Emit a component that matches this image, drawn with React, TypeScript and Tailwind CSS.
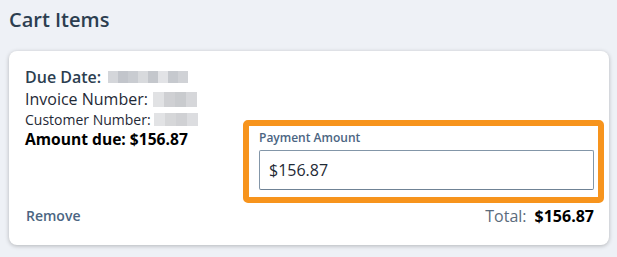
import React from 'react';

const Blur: React.FC<{ cells: string[]; h: number; w: number }> = ({ cells, h, w }) => (
  <span className="inline-flex align-middle" style={{ height: h }}>
    {cells.map((c, i) => (
      <span key={i} style={{ width: w, height: h, background: c }} />
    ))}
  </span>
);

const App: React.FC = () => {
  return (
    <div
      className="w-[617px] h-[257px] bg-[#eef1f6] pt-[6px] px-[9px] overflow-hidden"
      style={{ fontFamily: '"Open Sans", sans-serif' }}
    >
      <h2 className="text-[20px] leading-[28px] font-semibold text-[#2c3e50] mb-[17px]">Cart Items</h2>

      <div className="w-[600px] bg-white rounded-lg shadow-[0_1px_4px_rgba(0,0,0,0.25)] pt-[15px] pb-[18px] pl-[16px] pr-[15px] flex">
        <div className="flex-1 flex flex-col justify-between">
          <div>
            <div className="text-[16px] leading-[22px] font-semibold text-[#2c3e50] flex items-center gap-[7px]">
              Due Date:
              <Blur h={12} w={10} cells={['#d4d6da', '#c2c5cb', '#c9ccd1', '#d8dadd', '#c4c7cc', '#e2e3e6', '#c6c9ce', '#d0d2d6']} />
            </div>
            <div className="text-[16px] leading-[22px] text-[#1f2a36] flex items-center gap-[5px]">
              Invoice Number:
              <Blur h={15} w={11} cells={['#e1e2e4', '#cfd0d3', '#c9cbce', '#d6d7da']} />
            </div>
            <div className="text-[14px] leading-[19px] text-[#1f2a36] flex items-center gap-[3px]">
              Customer Number:
              <Blur h={13} w={11} cells={['#e2e3e5', '#d6d7d9', '#d0d1d4', '#dcdde0']} />
            </div>
            <div className="text-[15.6px] leading-[20px] font-bold text-black">Amount due: $156.87</div>
          </div>
          <div className="text-[14px] leading-[22px] font-semibold text-[#4b6582] pl-[1px]">Remove</div>
        </div>

        <div className="w-[361px] -mr-[10px] mt-[54px] flex flex-col">
          <div className="border-[6px] border-[#f7941d] rounded-[5px] pl-[10px] pr-[4px] pt-[3px] pb-[7px]">
            <div className="text-[12px] leading-[18px] font-semibold text-[#4b6582] mb-[3px]">Payment Amount</div>
            <div className="h-[40px] border border-[#8396a8] border-b-[#6f8295] rounded-[2px] flex items-center px-[9px] text-[16px] text-[#1f2a36]">
              $156.87
            </div>
          </div>
          <div className="flex justify-end items-baseline gap-[8px] pr-[10px] mt-[2px] leading-[22px]">
            <span className="text-[16px] text-[#5b6b7c]">Total:</span>
            <span className="text-[16px] font-bold text-black">$156.87</span>
          </div>
        </div>
      </div>
    </div>
  );
};

export default App;
